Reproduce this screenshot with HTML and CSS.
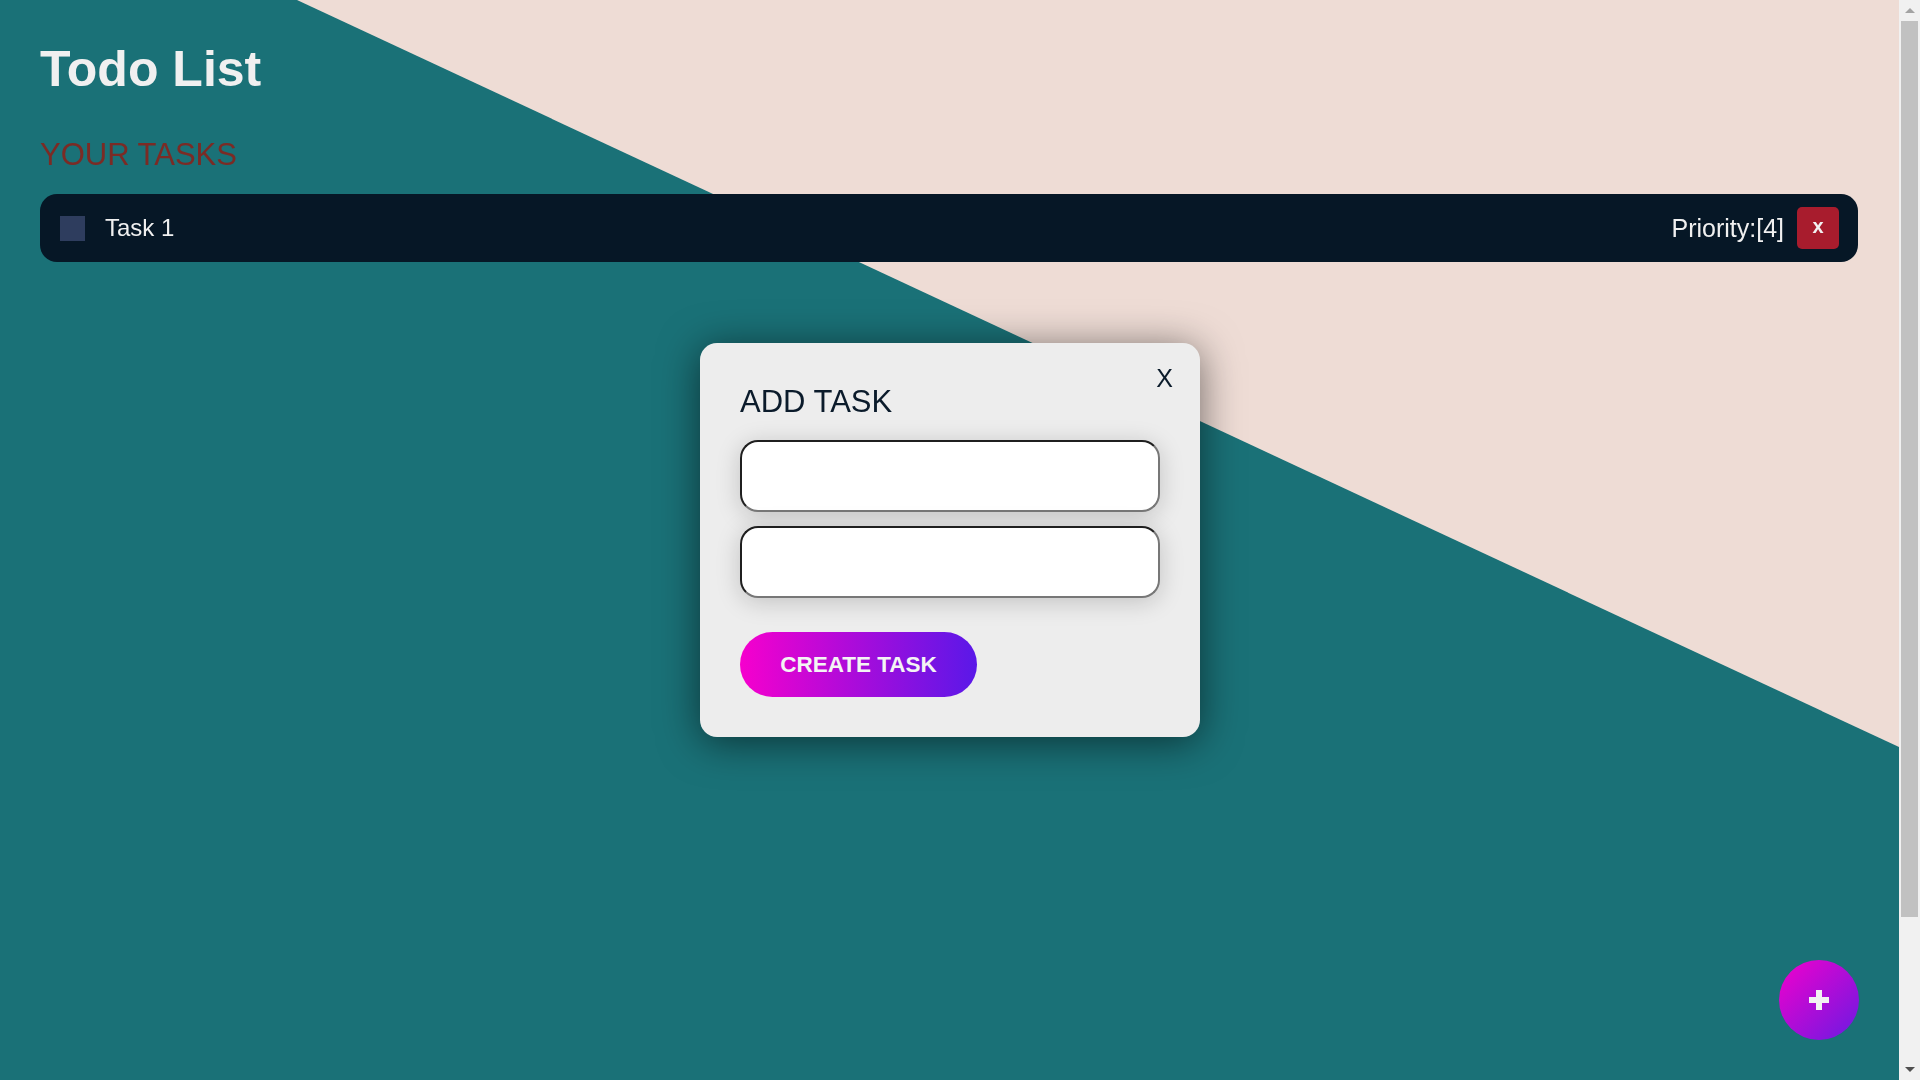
FILE: index.html
```html
<!DOCTYPE html>
<html lang="en">
<head>
<meta charset="utf-8">
<title>Todo List</title>
<link rel="stylesheet" href="styles.css">
</head>
<body>
<main class="app">
  <h1 class="title">Todo List</h1>
  <h2 class="section">YOUR TASKS</h2>
  <ul class="tasks">
    <li class="task">
      <span class="check"></span>
      <span class="task-name">Task 1</span>
      <span class="priority">Priority:[4]</span>
      <button class="del">x</button>
    </li>
  </ul>
</main>

<div class="modal">
  <button class="close">X</button>
  <h2 class="modal-title">ADD TASK</h2>
  <div class="fields">
    <input class="field" type="text">
    <input class="field" type="text">
  </div>
  <button class="create">CREATE TASK</button>
</div>

<button class="fab" aria-label="Add task">
  <svg width="20" height="20" viewBox="0 0 20 20"><rect x="0" y="7" width="20" height="6" fill="#f2f2f2"/><rect x="7" y="0" width="6" height="20" fill="#f2f2f2"/></svg>
</button>

<div class="scrollbar" aria-hidden="true">
  <span class="sb-arrow sb-up"></span>
  <span class="sb-track"><span class="sb-thumb"></span></span>
  <span class="sb-arrow sb-down"></span>
</div>
</body>
</html>
```
FILE: styles.css
```css
html {
  background: #1a7177;
}
body {
  margin: 0;
  padding-right: 21px;
  font-family: "Liberation Sans", Arial, sans-serif;
  color: #f0f0f0;
}
body::before {
  content: "";
  position: fixed;
  top: 0;
  left: 0;
  bottom: 0;
  right: 21px;
  z-index: -1;
  background: #eedcd5;
  clip-path: polygon(297px 0, 100% 0, 100% 747px);
}

.app {
  box-sizing: border-box;
  padding: 40px 41px 0 40px;
  display: flex;
  flex-direction: column;
}
.title {
  margin: 0;
  font-size: 50px;
  line-height: 59px;
  font-weight: bold;
  color: #f0f0f0;
}
.section {
  margin: 37px 0 0;
  font-size: 31px;
  line-height: 37px;
  font-weight: normal;
  color: #7b2b25;
}
.tasks {
  list-style: none;
  margin: 21px 0 0;
  padding: 0;
}
.task {
  height: 68px;
  box-sizing: border-box;
  padding: 0 19px 0 20px;
  background: #061726;
  border-radius: 17px;
  display: flex;
  align-items: center;
}
.check {
  width: 25px;
  height: 25px;
  background: #2e3d5e;
}
.task-name {
  margin-left: 20px;
  font-size: 24px;
  color: #f0f0f0;
  flex: 1;
}
.priority {
  font-size: 25px;
  color: #f0f0f0;
  margin-right: 13px;
}
.del {
  width: 42px;
  height: 42px;
  border: none;
  border-radius: 5px;
  background: #a81c2d;
  color: #f2f2f2;
  font-family: "Liberation Sans", Arial, sans-serif;
  font-weight: bold;
  font-size: 20px;
  padding: 0 0 3px;
}

.modal {
  position: fixed;
  left: 700px;
  top: 343px;
  width: 500px;
  box-sizing: border-box;
  padding: 40px;
  background: #ededed;
  border-radius: 17px;
  box-shadow: 0 5px 40px rgba(0, 0, 0, 0.55);
  display: flex;
  flex-direction: column;
  align-items: flex-start;
}
.close {
  position: absolute;
  top: 23px;
  right: 27px;
  padding: 0;
  border: none;
  background: none;
  font-family: "Liberation Sans", Arial, sans-serif;
  font-size: 25px;
  line-height: 25px;
  color: #0b1b2b;
}
.modal-title {
  margin: 0;
  font-size: 31px;
  line-height: 38px;
  font-weight: normal;
  color: #0b1b2b;
}
.fields {
  margin-top: 19px;
  width: 100%;
  display: flex;
  flex-direction: column;
  gap: 14px;
}
.field {
  box-sizing: border-box;
  width: 100%;
  height: 72px;
  margin: 0;
  border: 2px solid;
  border-color: #1f1f1f #777777 #777777 #1f1f1f;
  border-radius: 18px;
  background: #ffffff;
  box-shadow: 0 4px 24px rgba(0, 0, 0, 0.18);
}
.create {
  margin-top: 34px;
  width: 237px;
  height: 65px;
  border: none;
  border-radius: 33px;
  background: linear-gradient(90deg, #f600cd, #5a18e8);
  color: #f4f4f4;
  font-family: "Liberation Sans", Arial, sans-serif;
  font-weight: bold;
  font-size: 22.5px;
}

.fab {
  position: fixed;
  right: 61px;
  bottom: 40px;
  width: 80px;
  height: 80px;
  padding: 0;
  border: none;
  border-radius: 50%;
  background: linear-gradient(135deg, #f200cc, #6a1ae2);
  display: flex;
  align-items: center;
  justify-content: center;
}
.fab svg {
  display: block;
}

.scrollbar {
  position: fixed;
  top: 0;
  right: 0;
  bottom: 0;
  width: 21px;
  background: #f1f1f1;
  display: flex;
  flex-direction: column;
}
.sb-arrow {
  height: 21px;
  flex: none;
  display: flex;
  align-items: center;
  justify-content: center;
}
.sb-arrow::before {
  content: "";
  width: 0;
  height: 0;
  border-left: 5px solid transparent;
  border-right: 5px solid transparent;
}
.sb-up::before {
  border-bottom: 5px solid #a3a3a3;
}
.sb-down::before {
  border-top: 5px solid #505050;
}
.sb-track {
  flex: 1;
  padding: 0 2px;
}
.sb-thumb {
  display: block;
  height: 896px;
  background: #c1c1c1;
}
```
